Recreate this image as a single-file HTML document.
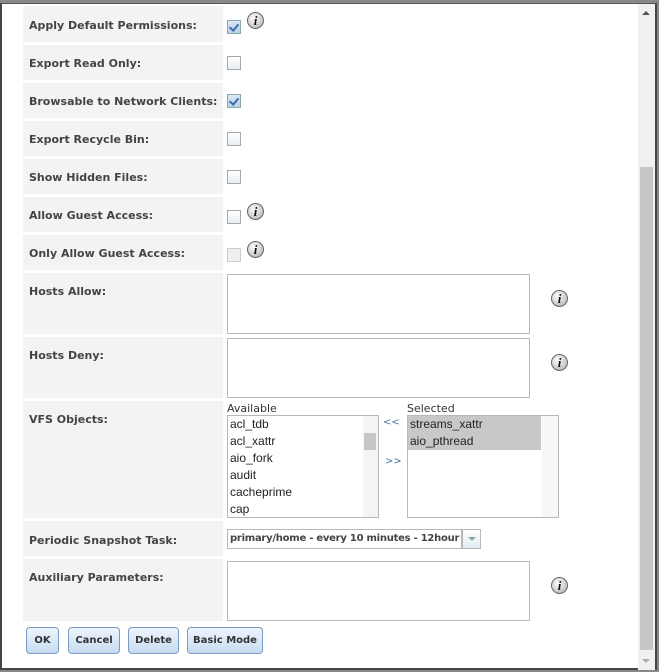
<!DOCTYPE html>
<html><head><meta charset="utf-8"><style>
*{box-sizing:border-box;margin:0;padding:0}
body{width:659px;height:672px;background:#888;position:relative;overflow:hidden;font-family:"DejaVu Sans","Liberation Sans",sans-serif}
#dlg{position:absolute;left:0;top:3px;width:657px;height:667px;background:#fff;border:2px solid #444;border-top:1px solid #555}
.row{position:absolute;left:23px;width:200px;background:#f3f3f3;font-size:11px;font-weight:bold;color:#444;padding-left:6px}
.cb{position:absolute;width:14px;height:14px;border:1px solid #a8a8a8;background:linear-gradient(#fff,#e8eef5)}
.cb.on::after{content:"";position:absolute;left:3px;top:1px;width:4px;height:7px;border:solid #3a6ea5;border-width:0 2px 2px 0;transform:rotate(40deg)}
.cb.on{background:linear-gradient(#dbe8f5,#b8d0ea);border-color:#8aa}
.cb.dis{background:#eee;border-color:#ccc}
.info{position:absolute;width:17px;height:17px;border-radius:50%;border:1px solid #666;background:radial-gradient(circle at 40% 35%,#fff,#aaa);font:italic bold 13px "Liberation Serif",serif;color:#111;text-align:center;line-height:15px}
.ta{position:absolute;left:227px;width:303px;border:1px solid #b8b8b8;background:#fff}
.lst{position:absolute;background:#fff;border:1px solid #b8b8b8;font:12px "Liberation Sans",sans-serif;color:#222}
.lst div{padding-left:2px;height:17px;line-height:17px}
.btn{position:absolute;top:627px;height:27px;border:1px solid #7a9cc0;border-radius:4px;background:linear-gradient(#eef5fc,#c6dcf2);font:bold 10px "DejaVu Sans",sans-serif;color:#333;text-align:center;line-height:25px}
</style></head><body>
<div id="dlg"></div>
<div style="position:absolute;left:638px;top:4px;width:17px;height:666px;background:#f0f0f0"></div>
<div style="position:absolute;left:640px;top:167px;width:13px;height:483px;background:#c6c6c6"></div>
<div style="position:absolute;left:642px;top:11px;border:4px solid transparent;border-bottom:4px solid #555;border-top:0"></div>
<div style="position:absolute;left:642px;top:659px;border:4px solid transparent;border-top:4px solid #aaa;border-bottom:0"></div>

<div class="row" style="top:6px;height:36px;line-height:40px">Apply Default Permissions:</div>
<div class="cb on" style="left:227px;top:20px"></div><div class="info" style="left:247px;top:12px">i</div>
<div class="row" style="top:45px;height:35px;line-height:37px">Export Read Only:</div>
<div class="cb" style="left:227px;top:56px"></div>
<div class="row" style="top:83px;height:35px;line-height:37px">Browsable to Network Clients:</div>
<div class="cb on" style="left:227px;top:94px"></div>
<div class="row" style="top:121px;height:35px;line-height:37px">Export Recycle Bin:</div>
<div class="cb" style="left:227px;top:132px"></div>
<div class="row" style="top:159px;height:35px;line-height:37px">Show Hidden Files:</div>
<div class="cb" style="left:227px;top:170px"></div>
<div class="row" style="top:197px;height:35px;line-height:37px">Allow Guest Access:</div>
<div class="cb" style="left:227px;top:210px"></div><div class="info" style="left:247px;top:203px">i</div>
<div class="row" style="top:235px;height:35px;line-height:37px">Only Allow Guest Access:</div>
<div class="cb dis" style="left:227px;top:248px"></div><div class="info" style="left:247px;top:241px">i</div>
<div class="row" style="top:273px;height:61px;line-height:38px">Hosts Allow:</div>
<div class="ta" style="top:274px;height:60px"></div><div class="info" style="left:551px;top:290px">i</div>
<div class="row" style="top:337px;height:61px;line-height:38px">Hosts Deny:</div>
<div class="ta" style="top:338px;height:60px"></div><div class="info" style="left:551px;top:354px">i</div>
<div class="row" style="top:401px;height:117px;line-height:38px">VFS Objects:</div>
<div style="position:absolute;left:227px;top:402px;font:11px 'DejaVu Sans',sans-serif;color:#333">Available</div>
<div style="position:absolute;left:407px;top:402px;font:11px 'DejaVu Sans',sans-serif;color:#333">Selected</div>
<div class="lst" style="left:227px;top:415px;width:152px;height:103px"><div>acl_tdb</div><div>acl_xattr</div><div>aio_fork</div><div>audit</div><div>cacheprime</div><div>cap</div></div>
<div style="position:absolute;left:363px;top:416px;width:15px;height:101px;background:#f4f4f4"></div>
<div style="position:absolute;left:364px;top:433px;width:12px;height:17px;background:#c6c6c6"></div>
<div style="position:absolute;left:383px;top:417px;font:10px 'DejaVu Sans',sans-serif;color:#4a6fa0">&lt;&lt;</div>
<div style="position:absolute;left:385px;top:456px;font:10px 'DejaVu Sans',sans-serif;color:#4a6fa0">&gt;&gt;</div>
<div class="lst" style="left:407px;top:415px;width:152px;height:103px"><div style="background:#c8c8c8;width:133px">streams_xattr</div><div style="background:#c8c8c8;width:133px">aio_pthread</div></div>
<div style="position:absolute;left:542px;top:416px;width:16px;height:101px;background:#f7f7f7"></div>
<div class="row" style="top:521px;height:35px;line-height:40px">Periodic Snapshot Task:</div>
<div style="position:absolute;left:227px;top:529px;width:235px;height:20px;border:1px solid #b8b8b8;font:bold 10px 'DejaVu Sans',sans-serif;letter-spacing:-0.25px;color:#444;line-height:18px;padding-left:2px;white-space:nowrap;overflow:hidden">primary/home - every 10 minutes - 12hour</div>
<div style="position:absolute;left:462px;top:529px;width:19px;height:20px;border:1px solid #b8b8b8;background:linear-gradient(#fff,#e4ebf3)"><div style="position:absolute;left:5px;top:7px;border:4px solid transparent;border-top:4px solid #8aa;border-bottom:0"></div></div>
<div class="row" style="top:559px;height:62px;line-height:38px">Auxiliary Parameters:</div>
<div class="ta" style="top:561px;height:60px"></div><div class="info" style="left:551px;top:577px">i</div>
<div class="btn" style="left:26px;width:33px">OK</div>
<div class="btn" style="left:68px;width:52px">Cancel</div>
<div class="btn" style="left:128px;width:51px">Delete</div>
<div class="btn" style="left:187px;width:76px">Basic Mode</div>
</body></html>
